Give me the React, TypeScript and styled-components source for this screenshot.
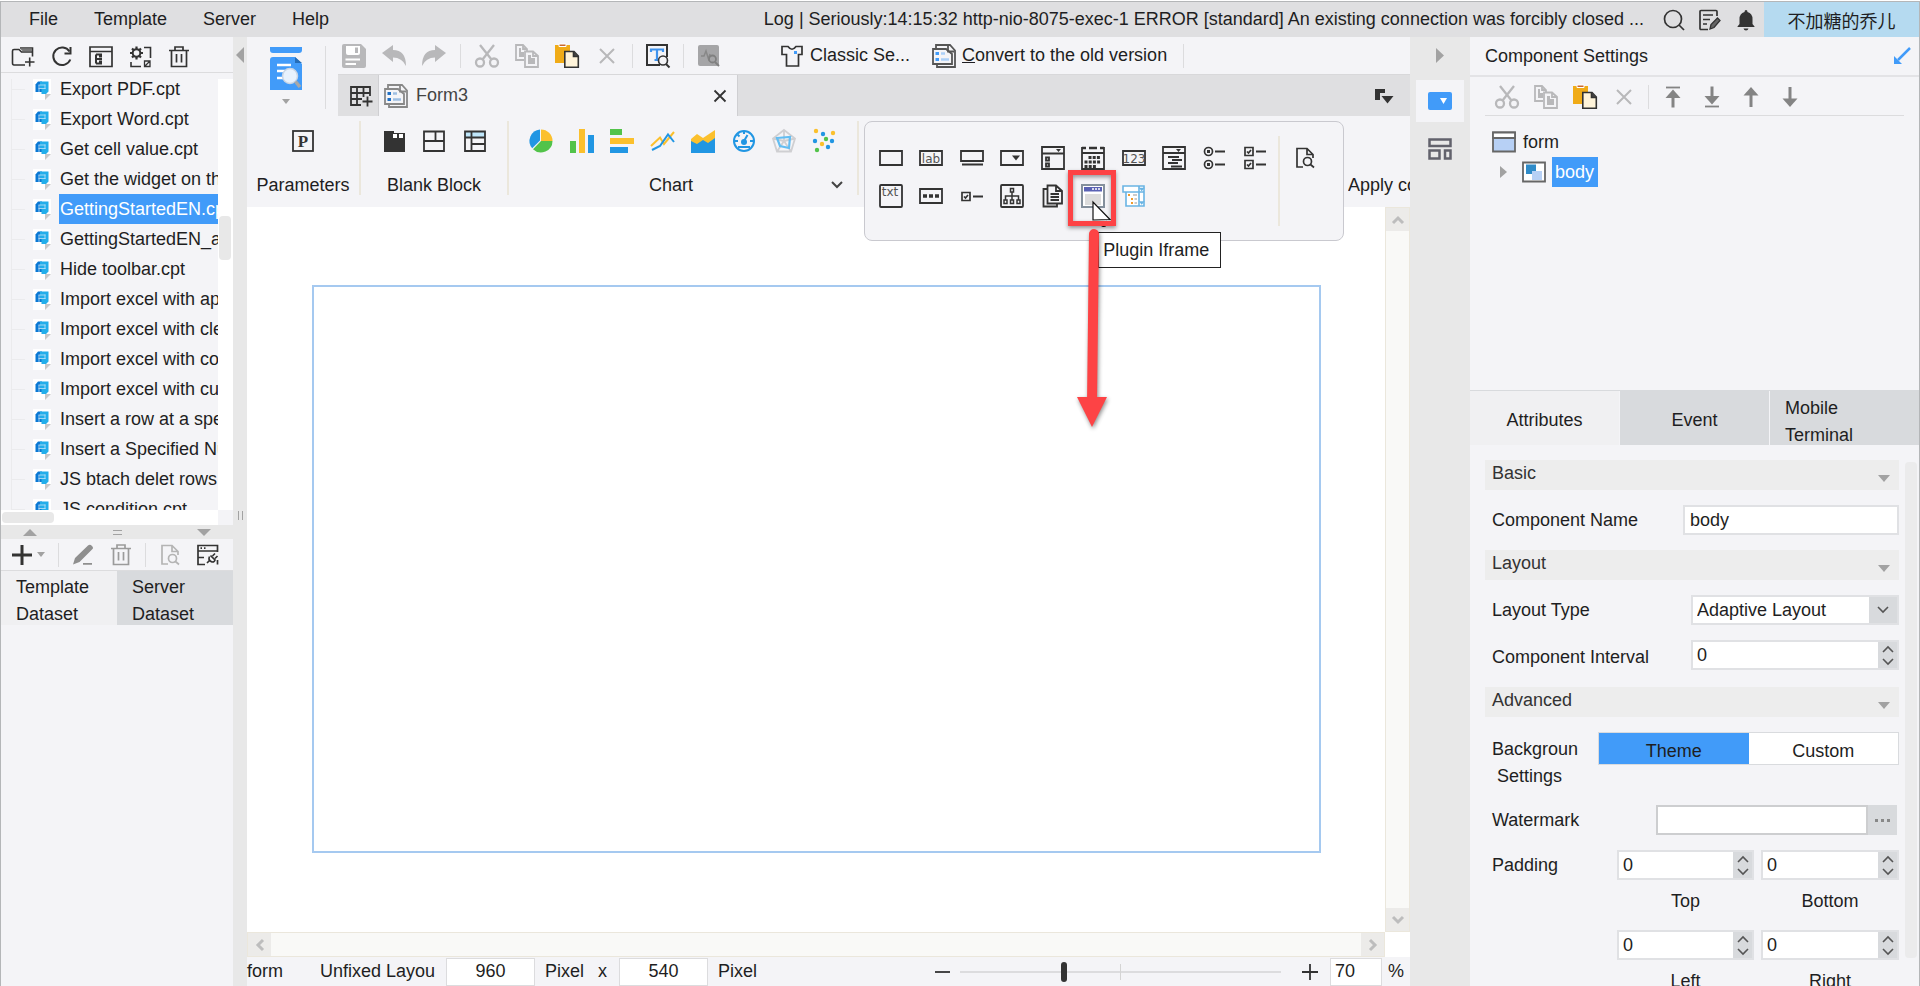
import React from "react";
import styled, { createGlobalStyle, css } from "styled-components";

const c = {
  panel: "#f4f4f7",
  bar: "#dfdfe1",
  strip: "#e8e8e8",
  tab: "#d8dadd",
  line: "#dcdcde",
  sand: "#ebe7dc",
  blue: "#419bf9",
  ink: "#1e1e22",
  icon: "#333333",
  dim: "#b8b8ba",
  red: "#fd4345",
};

const GlobalStyle = createGlobalStyle`
  * { box-sizing: border-box; }
  body { margin: 0; padding-top: 1px; overflow: hidden; }
  body, button, input, select {
    font-family: "Liberation Sans", "Noto Sans CJK SC", sans-serif;
    font-size: 18px;
    color: ${c.ink};
  }
  button { padding: 0; border: 0; background: none; cursor: default; }
  ul { list-style: none; margin: 0; padding: 0; }
`;

/* ---------- page frame ---------- */

const Page = styled.div`
  display: flex;
  flex-direction: column;
  height: calc(100vh - 1px);
  border: 1px solid #b4b6b8;
  border-bottom: 0;
  background: ${c.panel};
`;

const MenuBar = styled.header`
  display: flex;
  flex: none;
  height: 35px;
  align-items: center;
  background: ${c.bar};
`;

const Menus = styled.nav`
  display: flex;
  gap: 36px;
  padding-left: 28px;
`;

const MenuTools = styled.div`
  display: flex;
  align-items: center;
  gap: 12px;
  margin-left: auto;
`;

const LogText = styled.span`
  margin-right: 6px;
  white-space: nowrap;
`;

const UserName = styled.button`
  height: 35px;
  width: 155px;
  margin-left: -6px;
  background: #b5daf0;
`;

const Workspace = styled.div`
  display: grid;
  flex: 1;
  min-height: 0;
  grid-template-columns: 232px 14px minmax(0, 1fr) 60px 449px;
  grid-template-rows: minmax(0, 1fr);
`;

const IconButton = styled.button`
  display: flex;
  flex: none;
  align-items: center;
  justify-content: center;
  height: 24px;
  min-width: 24px;
`;

const Svg = styled.svg`
  display: block;
  flex: none;
  overflow: visible;
`;

const Separator = styled.span<{ $h: number; $m?: number }>`
  flex: none;
  width: 1px;
  height: ${(p) => p.$h}px;
  margin: 0 ${(p) => p.$m ?? 0}px;
  background: ${c.line};
`;

/* ---------- left side ---------- */

const LeftPanel = styled.aside`
  display: flex;
  flex-direction: column;
  min-height: 0;
`;

const LeftToolbar = styled.div`
  display: flex;
  flex: none;
  align-items: center;
  gap: 15px;
  height: 36px;
  padding: 4px 10px 0;
  border-bottom: 1px solid ${c.line};
`;

const TreeArea = styled.div`
  display: grid;
  flex: none;
  grid-template-columns: minmax(0, 1fr) 15px;
  grid-template-rows: 431px 15px;
  margin-top: 6px;
`;

const Files = styled.ul`
  overflow: hidden;
  margin-left: 10px;
  border-left: 1px solid #ebebed;
  & > li:first-child { margin-top: -5px; }
`;

const FileRow = styled.li`
  display: flex;
  align-items: center;
  height: 30px;
  &::before {
    content: "";
    flex: none;
    width: 13px;
    height: 1px;
    margin-right: 8px;
    background: #ebebed;
  }
`;

const FileName = styled.button<{ $on?: boolean }>`
  flex: 1;
  min-width: 0;
  height: 30px;
  margin-left: 8px;
  padding-left: 1px;
  overflow: hidden;
  text-align: left;
  white-space: nowrap;
  ${(p) => p.$on && css`background: ${c.blue}; color: #fff;`}
`;

const VTrack = styled.div`
  padding: 137px 1px 0;
  background: #fff;
`;

const HTrack = styled.div`
  padding: 2px 1px;
  background: #fff;
`;

const Thumb = styled.div<{ $w: string; $h: string }>`
  width: ${(p) => p.$w};
  height: ${(p) => p.$h};
  border-radius: 4px;
  background: ${c.strip};
`;

const SplitBar = styled.div`
  display: flex;
  flex: none;
  align-items: center;
  justify-content: space-between;
  height: 14px;
  padding: 0 22px;
  background: ${c.strip};
`;

const DataToolbar = styled.div`
  display: flex;
  flex: none;
  align-items: center;
  gap: 14px;
  height: 32px;
  padding: 0 9px;
  border-bottom: 1px solid ${c.line};
`;

const AddButton = styled(IconButton)`
  width: 36px;
  justify-content: flex-start;
  gap: 3px;
`;

const DataTabs = styled.div`
  display: grid;
  flex: none;
  grid-template-columns: 1fr 1fr;
`;

const DataTab = styled.button<{ $on?: boolean }>`
  height: 54px;
  padding: 3px 0 0 15px;
  line-height: 27px;
  text-align: left;
  background: ${(p) => (p.$on ? "#f0f0f2" : c.tab)};
`;

const LeftStrip = styled.div`
  display: flex;
  flex-direction: column;
  align-items: center;
  gap: 448px;
  padding-top: 10px;
  background: ${c.strip};
`;

/* ---------- centre ---------- */

const Center = styled.main`
  display: flex;
  flex-direction: column;
  min-width: 0;
`;

const Head = styled.div`
  display: grid;
  flex: none;
  grid-template-columns: 78px 13px minmax(0, 1fr);
  grid-template-rows: 37px 42px;
`;

const LogoButton = styled.button`
  grid-row: 1 / 3;
  display: flex;
  flex-direction: column;
  align-items: center;
  gap: 9px;
  padding-top: 10px;
`;

const HeadRule = styled.span`
  grid-row: 1 / 3;
  width: 1px;
  height: 63px;
  margin-top: 9px;
  background: ${c.line};
`;

const Toolbar = styled.div`
  display: flex;
  align-items: center;
  gap: 16px;
  padding-left: 4px;
`;

const TextButton = styled.button<{ $lead: number }>`
  display: flex;
  align-items: center;
  gap: 6px;
  margin-left: ${(p) => p.$lead}px;
  white-space: nowrap;
`;

const TabBar = styled.div`
  display: flex;
  align-items: center;
  background: ${c.bar};
  border-top: 1px solid #d8d8da;
`;

const NewTab = styled(IconButton)`
  width: 40px;
  padding-left: 6px;
`;

const DocTab = styled.div`
  display: flex;
  align-items: center;
  gap: 8px;
  width: 360px;
  height: 100%;
  padding: 0 5px;
  border: solid #cfcfd2;
  border-width: 0 1px;
  color: #444;
  background: ${c.panel};
`;

const CloseTab = styled(IconButton)`
  margin-left: auto;
`;

const TabMenu = styled(IconButton)`
  margin: 0 14px 0 auto;
`;

const Ribbon = styled.div`
  display: flex;
  flex: none;
  height: 91px;
`;

const Group = styled.section<{ $w: number }>`
  display: flex;
  flex: none;
  flex-direction: column;
  gap: 20px;
  width: ${(p) => p.$w}px;
  padding-top: 13px;
  align-items: center;
  white-space: nowrap;
`;

const GroupIcons = styled.div<{ $w: number }>`
  display: flex;
  justify-content: space-between;
  width: ${(p) => p.$w}px;
`;

const GroupLabel = styled.div`
  display: flex;
  align-items: center;
  justify-content: center;
  align-self: stretch;
  padding: 0 8px;
  line-height: 24px;
`;

const GrowLabel = styled.span`
  flex: 1;
  text-align: center;
`;

const SandRule = styled.span<{ $h: number }>`
  flex: none;
  width: 2px;
  height: ${(p) => p.$h}px;
  margin-top: 5px;
  background: ${c.sand};
`;

const WidgetPanel = styled.section`
  position: relative;
  z-index: 2;
  display: flex;
  flex: none;
  width: 480px;
  height: 120px;
  margin: 5px 0 0 5px;
  padding: 9px 14px 0;
  border: 1px solid #c9c9cf;
  border-radius: 8px;
  background: ${c.panel};
`;

const WidgetGrid = styled.div`
  display: grid;
  grid-template-columns: repeat(10, 24px);
  grid-auto-rows: 24px;
  justify-content: space-between;
  row-gap: 14px;
  width: 388px;
  margin: 15px 11px 0 0;
`;

const WidgetMore = styled(IconButton)`
  margin: 15px 0 0 13px;
`;

const Marked = styled.div`
  position: relative;
`;

const MarkBox = styled.div`
  position: absolute;
  left: -13px;
  top: -14px;
  width: 48px;
  height: 56px;
  border: 5px solid ${c.red};
  box-shadow: 0 2px 4px rgba(0, 0, 0, 0.4), inset 0 2px 4px rgba(0, 0, 0, 0.4);
`;

const Tooltip = styled.div`
  position: absolute;
  left: 17px;
  top: 48px;
  width: 123px;
  height: 36px;
  padding-left: 4px;
  border: 1px solid #222;
  line-height: 34px;
  white-space: nowrap;
  background: #fff;
`;

const MarkArrow = styled(Svg)`
  position: absolute;
  left: -4px;
  top: 40px;
  filter: drop-shadow(1px 2px 2px rgba(0, 0, 0, 0.45));
`;

const Cursor = styled(Svg)`
  position: absolute;
  left: 11px;
  top: 17px;
`;

const ClippedLabel = styled.span`
  min-width: 0;
  margin-left: 4px;
  padding-top: 57px;
  overflow: hidden;
  line-height: 24px;
  white-space: nowrap;
`;

const Stage = styled.div`
  display: grid;
  flex: 1;
  min-height: 0;
  grid-template-columns: minmax(0, 1fr) 25px;
  grid-template-rows: minmax(0, 1fr) 25px;
  background: #fff;
`;

const Canvas = styled.div`
  display: flex;
  padding: 78px 64px 79px 65px;
`;

const FormBody = styled.div`
  flex: 1;
  border: 2px solid #a5c9f0;
`;

const Scroll = styled.div<{ $vertical?: boolean }>`
  display: flex;
  flex-direction: ${(p) => (p.$vertical ? "column" : "row")};
  justify-content: space-between;
  border: 1px solid ${c.sand};
  background: #f9f9f7;
`;

const ScrollButton = styled.button`
  display: flex;
  align-items: center;
  justify-content: center;
  width: 23px;
  height: 23px;
  background: #ecebe9;
`;

const StatusBar = styled.footer`
  display: flex;
  flex: none;
  align-items: center;
  height: 29px;
  white-space: nowrap;
`;

const StatusText = styled.span<{ $w: number }>`
  flex: none;
  width: ${(p) => p.$w}px;
`;

const SizeInput = styled.input<{ $w: number; $left?: boolean }>`
  flex: none;
  width: ${(p) => p.$w}px;
  height: 28px;
  padding: 0 4px;
  border: 1px solid ${c.line};
  background: #fff;
  text-align: ${(p) => (p.$left ? "left" : "center")};
`;

const ZoomSlider = styled.input`
  flex: none;
  width: 321px;
  height: 20px;
  margin: 0 15px 0 5px;
  appearance: none;
  background:
    linear-gradient(#d4d4d4, #d4d4d4) 50% 50% / 1px 16px no-repeat,
    linear-gradient(${c.line}, ${c.line}) 0 50% / 100% 2px no-repeat;
  &::-webkit-slider-thumb {
    appearance: none;
    width: 6px;
    height: 20px;
    border-radius: 3px;
    background: #333;
  }
`;

const ZoomControls = styled.div`
  display: flex;
  align-items: center;
  margin-left: auto;
  padding-right: 6px;
`;

const ZoomValue = styled.label`
  display: flex;
  align-items: center;
  gap: 6px;
  margin-left: 10px;
`;

/* ---------- right side ---------- */

const RightStrip = styled.div`
  display: flex;
  flex-direction: column;
  align-items: center;
  padding-top: 11px;
  background: ${c.strip};
`;

const SideButton = styled.button<{ $on?: boolean }>`
  display: flex;
  align-items: center;
  justify-content: center;
  width: 48px;
  height: 42px;
  margin-top: ${(p) => (p.$on ? 17 : 6)}px;
  background: ${(p) => (p.$on ? c.panel : "transparent")};
`;

const RightPanel = styled.aside`
  display: flex;
  flex-direction: column;
  min-height: 0;
`;

const PanelTop = styled.section`
  flex: none;
  height: 353px;
`;

const PanelTitle = styled.h2`
  display: flex;
  align-items: center;
  justify-content: space-between;
  height: 40px;
  margin: 0;
  padding: 0 5px 0 15px;
  border-bottom: 2px solid #e3e3e6;
  font-size: 18px;
  font-weight: normal;
`;

const PanelToolbar = styled.div`
  display: flex;
  align-items: center;
  gap: 15px;
  height: 39px;
  margin: 0 15px;
  padding: 2px 10px 0;
  border-bottom: 1px solid ${c.line};
`;

const Tree = styled.ul`
  padding: 11px 0 0 22px;
`;

const TreeRow = styled.li<{ $in?: boolean }>`
  display: flex;
  align-items: center;
  gap: ${(p) => (p.$in ? 6 : 7)}px;
  height: 30px;
  padding-left: ${(p) => (p.$in ? 8 : 0)}px;
`;

const TreeArrow = styled.span`
  display: flex;
  align-items: center;
  width: 16px;
`;

const Selected = styled.span`
  height: 30px;
  padding: 0 4px 0 3px;
  line-height: 30px;
  color: #fff;
  background: ${c.blue};
`;

const PanelTabs = styled.div`
  display: grid;
  flex: none;
  grid-template-columns: 1fr 1fr 1fr;
  gap: 1px;
  border-top: 1px solid ${c.tab};
`;

const PanelTab = styled.button<{ $on?: boolean; $left?: boolean }>`
  height: 54px;
  padding: 4px 0 0 ${(p) => (p.$left ? 15 : 0)}px;
  line-height: 27px;
  text-align: ${(p) => (p.$left ? "left" : "center")};
  background: ${(p) => (p.$on ? "#f0f0f2" : c.tab)};
`;

const PanelBody = styled.div`
  display: flex;
  flex: 1;
  gap: 6px;
  min-height: 0;
  padding: 15px 2px 0 15px;
  overflow: hidden;
`;

const Form = styled.form`
  display: flex;
  flex: 1;
  flex-direction: column;
  gap: 15px;
`;

const SectionHead = styled.h3`
  display: flex;
  flex: none;
  justify-content: space-between;
  height: 30px;
  margin: 0;
  padding: 0 9px 0 7px;
  font-size: 18px;
  font-weight: normal;
  line-height: 27px;
  color: #333;
  background: #ededed;
  svg { margin-top: 15px; }
`;

const Field = styled.div<{ $h?: number; $line?: number }>`
  display: flex;
  flex: none;
  align-items: flex-start;
  justify-content: space-between;
  height: ${(p) => p.$h ?? 30}px;
  padding-left: 7px;
  line-height: ${(p) => p.$line ?? 30}px;
`;

const fieldBox = css`
  height: 30px;
  border: 2px solid #e0e1e4;
  background: #fff;
`;

const TextInput = styled.input`
  ${fieldBox}
  width: 216px;
  padding: 0 5px;
`;

const SelectBox = styled.div`
  ${fieldBox}
  display: flex;
  width: 208px;
  background: ${c.tab};
`;

const Select = styled.select`
  flex: 1;
  min-width: 0;
  padding: 0 4px;
  border: 0;
  appearance: none;
  background: #fff;
`;

const SelectFace = styled.span`
  display: flex;
  align-items: center;
  justify-content: center;
  width: 28px;
`;

const SpinBox = styled.div<{ $w: number }>`
  ${fieldBox}
  display: flex;
  flex: none;
  width: ${(p) => p.$w}px;
  background: ${c.tab};
`;

const SpinInput = styled.input`
  flex: 1;
  min-width: 0;
  padding: 0 4px;
  border: 0;
  background: #fff;
`;

const SpinButtons = styled.div`
  display: flex;
  flex-direction: column;
  justify-content: space-between;
  width: 19px;
`;

const SpinButton = styled.button`
  display: flex;
  align-items: center;
  justify-content: center;
  height: 13px;
`;

const Legend = styled.span`
  line-height: 27px;
  white-space: pre;
  padding-top: 4px;
`;

const Toggle = styled.div`
  display: grid;
  grid-template-columns: 1fr 1fr;
  width: 301px;
  height: 33px;
  border: 1px solid #d9dbde;
`;

const ToggleOption = styled.label<{ $on?: boolean }>`
  line-height: 36px;
  height: 31px;
  text-align: center;
  background: ${(p) => (p.$on ? c.blue : "#fff")};
`;

const ToggleInput = styled.input`
  position: absolute;
  margin: 0;
  appearance: none;
`;

const PickerBox = styled.div`
  display: flex;
  height: 30px;
  margin-right: 2px;
`;

const PickerInput = styled.input`
  width: 212px;
  border: 2px solid #cdced0;
  background: #fff;
`;

const PickerButton = styled.button`
  display: flex;
  align-items: center;
  justify-content: center;
  width: 29px;
  background: ${c.tab};
`;

const Sides = styled.div`
  display: grid;
  grid-template-columns: 137px 138px;
  column-gap: 7px;
  row-gap: 8px;
`;

const Side = styled.div`
  display: flex;
  flex-direction: column;
  label {
    line-height: 42px;
    text-align: center;
  }
`;

const PanelThumb = styled.div`
  width: 12px;
  height: 496px;
  margin-top: 2px;
  border-radius: 4px;
  background: #ebebec;
`;

/* ---------- icons ---------- */

type IconProps = { children: React.ReactNode; color?: string; w?: number };
const I = ({ children, color = c.icon, w = 2 }: IconProps) => (
  <Svg width="24" height="24" viewBox="0 0 24 24" fill="none" stroke={color} strokeWidth={w} aria-hidden="true">
    {children}
  </Svg>
);

const Triangle = ({ d, w, h, color = "#a2a2a2" }: { d: string; w: number; h: number; color?: string }) => (
  <Svg width={w} height={h} viewBox={`0 0 ${w} ${h}`} fill={color} aria-hidden="true"><path d={d} /></Svg>
);
const DownTri = ({ w = 12, h = 7 }) => <Triangle w={w} h={h} d={`M0 0H${w}L${w / 2} ${h}Z`} />;

const Chevron = ({ dir, color = "#555", size = 12, w = 2 }: { dir: "up" | "down" | "left" | "right"; color?: string; size?: number; w?: number }) => {
  const paths = { up: "M1 9L6 4L11 9", down: "M1 3L6 8L11 3", left: "M9 1L4 6L9 11", right: "M3 1L8 6L3 11" };
  return (
    <Svg width={size} height={size} viewBox="0 0 12 12" fill="none" stroke={color} strokeWidth={w} aria-hidden="true">
      <path d={paths[dir]} />
    </Svg>
  );
};

const NewFolder = () => <I w={1.6}><path d="M14 20H3Q1.500 20 1.500 18V6Q1.500 4.500 3 4.500H8L10.500 7H21.500V11.500M9 3H21.500V7M14 17H23.500M18.700 12.500V21.500" /><path d="M9 3.500H21V6H11.500Z" fill="#777" stroke="none" /></I>;
const Refresh = () => <I w={2}><path d="M19.500 6.500A8.800 8.800 0 1 0 20.300 14.500" /><path d="M20.500 2V8.500H14.500" /></I>;
const Details = () => <I w={1.700}><path d="M1 2H23V21.500H1ZM1 6.500H23" /><path d="M7 9.500V18.500M7 9.500H13M7 14H13M7 18.500H13M10 11.500H13M10 16.500H13" strokeWidth="2" /></I>;
const GearBox = () => (
  <I w={1.600}>
    <circle cx="8.500" cy="8" r="3.800" strokeWidth="2" />
    <path d="M8.500 1.500V4M8.500 12V14.500M2 8H4.500M12.500 8H15M4 3.500L5.800 5.300M11.200 10.700L13 12.500M13 3.500L11.200 5.300M4 12.500L5.800 10.700" strokeWidth="2.200" />
    <path d="M16 2.500H22.500V13M3 17V21.500H13" />
    <path d="M16.500 16H22V21.500H16.500ZM22 16L16.500 21.500" strokeWidth="1.300" />
  </I>
);
const Trash = ({ color = c.icon }) => <I color={color} w={1.700}><path d="M2 5.500H22M8 5V2H16V5M4.500 5.500V21.500H19.500V5.500M9.500 9V17.500M14.500 9V17.500" /></I>;

const FileIcon = () => (
  <Svg width="18" height="21" viewBox="0 0 18 21" aria-hidden="true">
    <path d="M0 0H18V15L12 21H0Z" fill="#fff" />
    <path d="M2.500 5.500L5 2.500H9V13H2.500Z" fill="#0a78d4" />
    <path d="M7 2.500H15.500V12.500L13 15H8.500V10H7Z" fill="#22aeea" />
    <path d="M5.500 6H12.500M5.500 9.500H12.500M12 5.500V10M6 6V13" stroke="#bfe2f7" strokeWidth="0.800" fill="none" />
    <path d="M12 15H18L12 21Z" fill="#c8c8c8" />
  </Svg>
);

const Pencil = () => <I color="none"><path d="M2 21.500L4 15L17 2.500Q19 1 21 3T21 6.500L8.500 19ZM12 20H21V21.800H12Z" fill="#8f8f8f" /></I>;
const PagePreview = ({ color = c.icon }) => <I color={color} w={1.700}><path d="M10 21H4V2.500H14L20 8.500V12M14 2.500V8.500H20" /><circle cx="14.500" cy="15.500" r="4" /><path d="M17.500 18.500L21 21.500" /></I>;
const DataSettings = () => (
  <I w={1.700}>
    <path d="M9 21.500H2V2.500H21.500V9M2 8H21.500M4.500 5.200H6M8 5.200H9.500M2 14.500H8M21.500 17V21.500" />
    <path d="M11 20L14 17M13.500 13.500Q12 17 15 18.500T19 17L14.500 12.500M16.500 13L19 10.500M19 15.500L21.500 13" />
  </I>
);

const Logo = () => (
  <Svg width="32" height="43" viewBox="0 0 32 43" aria-hidden="true">
    <path d="M0 0H32V3Q32 6 29 6H3Q0 6 0 3Z" fill={c.blue} />
    <path d="M3 10H25L32 17V43H0V13Q0 10 3 10Z" fill={c.blue} />
    <path d="M25 10V16H32Z" fill="#256db8" />
    <path d="M7 18H21M7 24H15M7 31H14" stroke="#fff" strokeWidth="2.500" />
    <circle cx="20" cy="29" r="7.500" fill="#e8f2fd" stroke="#c9d5e4" strokeWidth="1.500" />
    <path d="M25.500 34.500L30 40" stroke="#a8a8a8" strokeWidth="3.500" />
  </Svg>
);

const Save = () => (
  <I color="none">
    <path d="M2 0H19L24 5V22Q24 24 22 24H2Q0 24 0 22V2Q0 0 2 0Z" fill={c.dim} />
    <path d="M4 2H18V9Q18 11 16 11H6Q4 11 4 9Z" fill="#fff" /><path d="M13 3.500H16V9H13Z" fill={c.dim} />
    <path d="M3.500 15.500H18M3.500 20H14" stroke="#fff" strokeWidth="1.800" />
  </I>
);
const Undo = () => <I color="none"><path d="M0 9L11 1V6Q24 6 24 22Q20 13.500 11 13.500V18Z" fill={c.dim} /></I>;
const Redo = () => <I color="none"><path d="M24 9L13 1V6Q0 6 0 22Q4 13.500 13 13.500V18Z" fill={c.dim} /></I>;
const Cut = () => <I color={c.dim} w={2.300}><circle cx="5" cy="18.500" r="4" /><circle cx="19" cy="18.500" r="4" /><path d="M7.500 15.500L19 1M16.500 15.500L5 1" /></I>;
const Copy = () => (
  <I color={c.dim} w={1.800}>
    <path d="M9 16H1V1H8L12 5V7M8 1V5H12" /><path d="M4 4H6V8H9V13H4Z" fill={c.dim} stroke="none" />
    <path d="M10 7.500H18L23 12V23H10ZM18 7.500V12H23" /><path d="M13 11H16V14H20V20H13Z" fill={c.dim} stroke="none" />
  </I>
);
const Paste = () => (
  <I w={1.600}>
    <path d="M0 1H15V7H9V19H0Z" fill="#f0ab17" stroke="none" />
    <path d="M4 0H11V2.500H4Z" fill="#c8672c" stroke="#fff" strokeWidth="1" />
    <path d="M9.800 7.500H19L23.300 12V23.200H9.800Z" fill="#fff4da" /><path d="M18.500 7.500V12.500H23.500" fill="#444" />
  </I>
);
const Cross = ({ color = c.dim }) => <I color={color}><path d="M5 5L19 19M19 5L5 19" /></I>;
const FindText = () => (
  <I>
    <path d="M14 21H1V1H21V13" /><path d="M5 8V5.500H17V8M11 5.500V16M8.500 16H13.500" stroke="#3f93ee" strokeWidth="2.200" />
    <circle cx="17" cy="16.500" r="4.500" fill={c.panel} strokeWidth="1.600" /><path d="M20 20L23.500 23.500" />
  </I>
);
const Monitor = () => (
  <I color="none"><rect x="1" y="1" width="21" height="21" rx="2" fill="#a5a5a7" />
    <path d="M4 12H7L9 7L11.500 15L13 10" stroke="#888" strokeWidth="1.500" /><circle cx="15.500" cy="15" r="3.500" stroke="#808080" strokeWidth="1.800" /><path d="M18 18L22 22" stroke="#808080" strokeWidth="2" />
  </I>
);
const Shirt = () => <I w={1.700}><path d="M6.500 22V10.500H2V2.500H8Q12 8 16 2.500H22V10.500H18.500V22Z" /><path d="M14 7H17V10H14Z" fill={c.blue} stroke="none" /></I>;
const FormIcon = ({ accent = "#1f6fc4", color = "#888" }) => (
  <I color={color} w={1.800}>
    <path d="M4 5V1H18L23 6.500V23H5V20" /><path d="M1 5H14L20 10V20H1Z" fill={c.panel} />
    <path d="M16 1.500V7.500H22" /><path d="M3.500 8H7V11H3.500ZM3.500 14H7V17H3.500Z" fill={accent} stroke="none" />
    <path d="M9 9.500H13M9 15.500H17" stroke={accent} strokeOpacity="0.400" strokeWidth="2.500" />
  </I>
);
const GridPlus = () => <I w={1.800}><path d="M12 21H2V3H21V12M2 9H21M2 15H13M8 3V21M14.500 3V13M13.500 17.500H23.500M18.500 12.500V22.500" /></I>;
const TabList = () => <I color="none"><path d="M3 5H13V9H8V16H3Z" fill={c.icon} /><path d="M9.500 12H21.500L15.500 19.500Z" fill={c.icon} /></I>;
const CloseIcon = () => <I w={1.800}><path d="M6.500 6.500L17.500 17.500M17.500 6.500L6.500 17.500" /></I>;

const ParamIcon = () => (
  <I w={1.800}><rect x="2" y="2" width="20" height="20" />
    <text x="12" y="18" fontFamily="Liberation Serif, serif" fontWeight="bold" fontSize="17" textAnchor="middle" fill={c.icon} stroke="none">P</text>
  </I>
);
const TabBlock = () => <I color="none"><path d="M2 2H12V4H23V23H2Z" fill={c.icon} /><path d="M11 5H15V9H11ZM17 5H21V9H17Z" fill="#fff" /></I>;
const Block2 = () => <I w={1.800}><path d="M2 2.500H22V22H2ZM2 12H22M13.500 2.500V12" /></I>;
const Block3 = () => <I w={1.800}><path d="M2 2.500H22V8.500H2Z" fill="#bfe6fa" stroke="none" /><path d="M2 2.500H22V22H2ZM2 8.500H22M8.500 2.500V22M8.500 15H22" /></I>;

const G = "#52c34a", Y = "#fbc02d", B = "#2196e3";
const Pie = () => <I color="none"><path d="M12 12V0.500A11.500 11.500 0 0 1 23.500 12Z" fill={Y} /><path d="M12 12H23.500A11.500 11.500 0 0 1 4 20.200Z" fill={G} /><path d="M11 11.500V0.500A11.500 11.500 0 0 0 3.200 19.300Z" fill={B} /></I>;
const Column = () => <I color="none"><path d="M0 12H6V24H0Z" fill={G} /><path d="M9 0H15V24H9Z" fill={Y} /><path d="M18 6H24V24H18Z" fill={B} /></I>;
const Bar = () => <I color="none"><path d="M0 0H12V6H0Z" fill={G} /><path d="M0 9H24V15H0Z" fill={Y} /><path d="M0 18H18V24H0Z" fill={B} /></I>;
const Line = () => <I><path d="M0 17L9 8.500L13 15L23 3" stroke={Y} /><path d="M1 21L9 17L17 5.500L23 13" stroke={B} /></I>;
const Area = () => <I color="none"><path d="M0 10L6 5L12 9L24 1V24H0Z" fill={Y} /><path d="M0 12L6 15L12 11L17 14L24 9V24H0Z" fill={B} /></I>;
const Gauge = () => <I color={B}><circle cx="12" cy="12" r="10" /><circle cx="12" cy="13" r="3" fill={B} stroke="none" /><path d="M12 12L15.500 6M2.500 12H6M18 12H21.500M12 2.500V5M5.500 5.500L7.500 7.500M6 18H18" /></I>;
const Radar = () => <I color="#cfcfd2" w={1.800}><path d="M12 1L23 9.500L19 22.500H5L1 9.500ZM12 1V12L23 9.500M12 12L19 22.500M12 12L5 22.500M12 12L1 9.500" /><path d="M5 9L18 8L17 19L8 17Z" stroke="#62bdf2" strokeWidth="2.200" /></I>;
const Scatter = () => (
  <I color="none">
    {([[3, 2, Y], [20, 4, Y], [10, 5, B], [2, 12, B], [13, 10, G], [19, 12, B], [9, 15, Y], [15, 18, B], [4, 21, G]] as [number, number, string][]).map(([x, y, f]) => <circle key={`${x}-${y}`} cx={x} cy={y} r="2.200" fill={f} />)}
  </I>
);

const Mono = ({ x, y, children, size = 12 }: { x: number; y: number; children: string; size?: number }) => (
  <text x={x} y={y} fontFamily="DejaVu Sans, sans-serif" fontSize={size} textAnchor="middle" fill="#555" stroke="none">{children}</text>
);
const TextField = () => <I w={1.800}><path d="M1 5H23V19H1Z" /></I>;
const LabelIcon = () => <I w={1.800}><path d="M1 5H23V19H1Z" /><Mono x={12} y={16.5}>lab</Mono></I>;
const ButtonIcon = () => <I w={1.800}><path d="M1 5H23V15H1ZM2 18.500H23" /></I>;
const ComboIcon = () => <I w={1.800}><path d="M1 5H23V19H1Z" /><path d="M12 9.500H20L16 14.500Z" fill={c.icon} stroke="none" /></I>;
const CheckCombo = () => <I w={1.800}><path d="M1 1H23V23H1ZM1 7.500H23M5 11.500H8V14.500H5ZM5 17.500H8V20.500H5Z" /><path d="M15 3H20L17.500 6Z" fill={c.icon} stroke="none" /></I>;
const DateIcon = () => (
  <I w={1.800}>
    <path d="M1 1V23H23V1M1 7H23" /><path d="M1 2H5M8 2H16M19 2H23" strokeWidth="2.500" />
    <path d="M7.500 11.500H20M3.500 16H20M3.500 20.500H16" strokeWidth="3" strokeDasharray="3 1.200" />
  </I>
);
const NumberIcon = () => <I w={1.800}><path d="M1 5H23V19H1Z" /><Mono x={12} y={16.5}>123</Mono></I>;
const ListIcon = () => <I w={1.800}><path d="M1 1H23V23H1ZM1 7H23M6 11H17M10 14H20M6 17H16M9 20.500H20" /><path d="M14 3H19L16.500 6Z" fill={c.icon} stroke="none" /></I>;
const RadioIcon = () => <I w={1.700}><circle cx="5.500" cy="5.500" r="4" /><circle cx="5.500" cy="18.500" r="4" /><path d="M4 5.500H7M4 18.500H7" strokeWidth="3" /><path d="M12 5.500H22M12 18.500H22" strokeWidth="2" /></I>;
const ChecksIcon = () => <I w={1.700}><path d="M2 1.500H10V9.500H2ZM2 14.500H10V22.500H2ZM4 5.500L5.500 7L8 4M4 18.500L5.500 20L8 17" /><path d="M13 5.500H23M13 18.500H23" strokeWidth="2" /></I>;
const TxtIcon = () => <I w={1.800}><rect x="1" y="1" width="22" height="22" rx="1" /><Mono x={11} y={12}>txt</Mono></I>;
const PasswordIcon = () => <I w={1.800}><path d="M1 5H23V19H1Z" /><path d="M4 12H20" strokeWidth="3.500" strokeDasharray="4 2" /></I>;
const CheckIcon = () => <I w={1.700}><path d="M2 8.500H10V16.500H2ZM4 12.500L5.500 14L8 11" /><path d="M13 12.500H23" strokeWidth="2" /></I>;
const OrgIcon = () => <I w={1.800}><rect x="1" y="1" width="22" height="22" rx="1" /><path d="M10.500 4.500H13.500V8H10.500ZM12 8V16M5.500 16V12H18.500V16M4 16H7V19.500H4ZM10.500 16H13.500V19.500H10.500ZM17 16H20V19.500H17Z" strokeWidth="1.500" /></I>;
const DocsIcon = () => <I w={1.800}><path d="M6 5H2.500V22.500H16V20" /><path d="M6.500 1.500H15L21 7V19.500H6.500ZM15 1.500V7H21M9.500 10H18M9.500 13H18M9.500 16H18" /></I>;
const IframeIcon = () => <I><path d="M1 1H23V23H1Z" fill="#fff" stroke="#84909c" /><path d="M3 3H21V7.500H3Z" fill="#5a62b4" stroke="none" /><path d="M11 5H19" stroke="#fff" strokeWidth="1.500" strokeDasharray="2 1" /><path d="M4 10H20V21H4Z" fill="#dcdcdc" stroke="none" /></I>;
const TreeCombo = () => <I color="#69b4e4" w={1.600}><path d="M1 2H22V8H1ZM4 8V22H22V8M17 2V22" fill="#fff" /><path d="M18.500 4.500H21L19.700 6ZM18.500 18H21L19.700 19.500Z" fill="#69b4e4" /><path d="M6 11H8M9 15H11M9 19H11" stroke="#f09a2c" strokeWidth="2" /><path d="M11 11H15M12.500 15H15M12.500 19H15" stroke="#bbb" /></I>;

const SearchIcon = () => <I w={1.700}><circle cx="11" cy="11" r="8.500" /><path d="M17 17L22 22" /></I>;
const NoteIcon = () => <I w={1.700}><path d="M10 21.500H3Q2 21.500 2 20.500V3.500Q2 2.500 3 2.500H18Q19 2.500 19 3.500V8M5 7H15M5 11.500H12M5 16H9" /><path d="M12 21L13 16.500L19.500 10L22 12.500L16 19.500Z" fill="#666" strokeWidth="1.300" /></I>;
const BellIcon = () => <I color="none"><path d="M12 2Q13.500 2 13.500 4Q18.500 5.500 18.500 11V16L20.500 18.500V19H3.500V18.500L5.500 16V11Q5.500 5.500 10.500 4Q10.500 2 12 2ZM9.500 20.500H14.500Q14 22.500 12 22.500T9.500 20.500Z" fill={c.icon} /></I>;
const PopIn = () => <I color={c.blue}><path d="M20 4L8 16" strokeWidth="2.500" /><path d="M4 12V20H12Z" fill={c.blue} stroke="none" /></I>;
const Move = ({ up, edge }: { up?: boolean; edge?: boolean }) => (
  <I color="#848484" w={3}>
    <g transform={up ? undefined : "rotate(180 12 12)"}>
      {edge && <path d="M5 2.500H19" strokeWidth="1.800" />}
      <path d={edge ? "M12 9V22.500" : "M12 8V22"} />
      <path d={edge ? "M12 4.500L19.500 13H4.500Z" : "M12 2L19.500 10.500H4.500Z"} fill="#848484" stroke="none" />
    </g>
  </I>
);
const SideBlue = () => <Svg width="24" height="18" viewBox="0 0 24 18" aria-hidden="true"><rect width="24" height="18" rx="2" fill={c.blue} /><path d="M12 6H19L15.500 12Z" fill="#fff" /></Svg>;
const SideLayout = () => <Svg width="24" height="22" viewBox="0 0 24 22" fill="none" stroke="#62626c" strokeWidth="2.500" aria-hidden="true"><path d="M1.500 1.500H22.500V8H1.500ZM1.500 12.500H11.500V20.500H1.500ZM17 12.500H22.500V20.500H17Z" /></Svg>;
const FormNode = () => <I w={1.800} color="#666"><path d="M1 2.500H23V21.500H1Z" fill="#b7d0f5" /><path d="M1 2.500H23V8H1Z" fill="#fff" /></I>;
const BodyNode = () => <I w={1.800} color="#666"><path d="M1 2.500H23V21.500H1Z" fill="#fff" /><path d="M4 4.500H14V14H4Z" fill="#2f8bc8" stroke="none" /><path d="M10 11H20V20H10Z" fill="#b7d0f5" stroke="none" /></I>;

/* ---------- data ---------- */

const files = [
  "Export PDF.cpt", "Export Word.cpt", "Get cell value.cpt", "Get the widget on the",
  "GettingStartedEN.cpt", "GettingStartedEN_a", "Hide toolbar.cpt", "Import excel with app",
  "Import excel with clea", "Import excel with con", "Import excel with cust", "Insert a row at a spec",
  "Insert a Specified Nu", "JS btach delet rows.c", "JS condition.cpt",
];

const charts: [string, React.FC][] = [
  ["Pie", Pie], ["Column", Column], ["Bar", Bar], ["Line", Line],
  ["Area", Area], ["Gauge", Gauge], ["Radar", Radar], ["Scatter", Scatter],
];

const widgets: [string, React.FC][] = [
  ["Text", TextField], ["Label", LabelIcon], ["Button", ButtonIcon], ["Drop-down box", ComboIcon],
  ["Drop-down checkbox", CheckCombo], ["Date", DateIcon], ["Number", NumberIcon], ["List", ListIcon],
  ["Radio group", RadioIcon], ["Checkbox group", ChecksIcon], ["Text area", TxtIcon],
  ["Password", PasswordIcon], ["Checkbox", CheckIcon], ["Tree", OrgIcon], ["Multi file", DocsIcon],
  ["Plugin Iframe", IframeIcon], ["Tree drop-down", TreeCombo],
];

const Tool = ({ name, children }: { name: string; children: React.ReactNode }) => (
  <IconButton type="button" aria-label={name}>{children}</IconButton>
);

const Spin = ({ id, w }: { id: string; w: number }) => (
  <SpinBox $w={w}>
    <SpinInput id={id} defaultValue="0" inputMode="numeric" />
    <SpinButtons>
      <SpinButton type="button" aria-label="Increase"><Chevron dir="up" w={1.6} /></SpinButton>
      <SpinButton type="button" aria-label="Decrease"><Chevron dir="down" w={1.6} /></SpinButton>
    </SpinButtons>
  </SpinBox>
);

const Section = ({ children }: { children: string }) => (
  <SectionHead>{children}<DownTri /></SectionHead>
);

/* ---------- page ---------- */

const Left = () => (
  <LeftPanel>
    <LeftToolbar>
      <Tool name="New folder"><NewFolder /></Tool>
      <Tool name="Refresh"><Refresh /></Tool>
      <Tool name="Details"><Details /></Tool>
      <Tool name="Settings"><GearBox /></Tool>
      <Tool name="Delete"><Trash /></Tool>
    </LeftToolbar>
    <TreeArea>
      <Files>
        {files.map((name, i) => (
          <FileRow key={name}>
            <FileIcon />
            <FileName type="button" $on={i === 4}>{name}</FileName>
          </FileRow>
        ))}
      </Files>
      <VTrack><Thumb $w="12px" $h="44px" /></VTrack>
      <HTrack><Thumb $w="52px" $h="11px" /></HTrack>
    </TreeArea>
    <SplitBar>
      <Triangle w={14} h={7} d="M0 7L7 0L14 7Z" />
      <Triangle w={9} h={5} d="M0 0H9V1H0ZM0 4H9V5H0Z" />
      <DownTri w={14} />
    </SplitBar>
    <DataToolbar>
      <AddButton type="button" aria-label="Add dataset">
        <I w={3}><path d="M2 12H22M12 2V22" /></I><DownTri w={8} h={5} />
      </AddButton>
      <Separator $h={24} $m={-2} />
      <Tool name="Edit dataset"><Pencil /></Tool>
      <Tool name="Delete dataset"><Trash color="#9b9b9b" /></Tool>
      <Separator $h={24} $m={-2} />
      <Tool name="Preview dataset"><PagePreview color="#b4b4b4" /></Tool>
      <Tool name="Dataset settings"><DataSettings /></Tool>
    </DataToolbar>
    <DataTabs>
      <DataTab type="button" $on>Template<br />Dataset</DataTab>
      <DataTab type="button">Server<br />Dataset</DataTab>
    </DataTabs>
  </LeftPanel>
);

const WidgetsPanel = () => (
  <WidgetPanel>
    <WidgetGrid>
      {widgets.map(([name, Icon]) =>
        name === "Plugin Iframe" ? (
          <Marked key={name}>
            <Tool name={name}><Icon /></Tool>
            <Tooltip role="tooltip">{name}</Tooltip>
            <Cursor width="20" height="30" viewBox="0 0 20 30" aria-hidden="true">
              <path d="M1 1V19L18 18.500Z" fill="#fff" stroke="#111" strokeWidth="1.200" />
              <path d="M9 20Q8 26 13 25L15 20" fill="#fff" stroke="#111" strokeWidth="1.500" />
            </Cursor>
            <MarkBox />
            <MarkArrow width="32" height="206" viewBox="0 0 32 206" aria-hidden="true">
              <path d="M17 10L15 180" stroke={c.red} strokeWidth="10" strokeLinecap="round" />
              <path d="M0 173H30L15 203Z" fill={c.red} />
            </MarkArrow>
          </Marked>
        ) : (
          <Tool key={name} name={name}><Icon /></Tool>
        ),
      )}
    </WidgetGrid>
    <SandRule $h={90} />
    <WidgetMore type="button" aria-label="Preview"><PagePreview /></WidgetMore>
  </WidgetPanel>
);

const Middle = () => (
  <Center>
    <Head>
      <LogoButton type="button" aria-label="Preview form"><Logo /><DownTri w={8} h={5} /></LogoButton>
      <HeadRule />
      <Toolbar>
        <Tool name="Save"><Save /></Tool>
        <Tool name="Undo"><Undo /></Tool>
        <Tool name="Redo"><Redo /></Tool>
        <Separator $h={24} $m={-2} />
        <Tool name="Cut"><Cut /></Tool>
        <Tool name="Copy"><Copy /></Tool>
        <Tool name="Paste"><Paste /></Tool>
        <Tool name="Delete"><Cross /></Tool>
        <Separator $h={24} $m={-3} />
        <Tool name="Find"><FindText /></Tool>
        <Separator $h={24} $m={-3} />
        <Tool name="Monitor"><Monitor /></Tool>
        <TextButton type="button" $lead={43}><Shirt />Classic Se...</TextButton>
        <TextButton type="button" $lead={6}><FormIcon accent={c.blue} color="#555" /><span><u>C</u>onvert to the old version</span></TextButton>
        <Separator $h={24} />
      </Toolbar>
      <TabBar>
        <NewTab type="button" aria-label="New tab"><GridPlus /></NewTab>
        <DocTab>
          <FormIcon />Form3
          <CloseTab type="button" aria-label="Close"><CloseIcon /></CloseTab>
        </DocTab>
        <TabMenu type="button" aria-label="Open tabs"><TabList /></TabMenu>
      </TabBar>
    </Head>
    <Ribbon>
      <Group $w={112}>
        <Tool name="Parameter pane"><ParamIcon /></Tool>
        <GroupLabel>Parameters</GroupLabel>
      </Group>
      <SandRule $h={74} />
      <Group $w={146}>
        <GroupIcons $w={105}>
          <Tool name="Tab block"><TabBlock /></Tool>
          <Tool name="Report block"><Block2 /></Tool>
          <Tool name="Table block"><Block3 /></Tool>
        </GroupIcons>
        <GroupLabel>Blank Block</GroupLabel>
      </Group>
      <SandRule $h={74} />
      <Group $w={348}>
        <GroupIcons $w={308}>
          {charts.map(([name, Icon]) => <Tool key={name} name={name}><Icon /></Tool>)}
        </GroupIcons>
        <GroupLabel>
          <GrowLabel>Chart</GrowLabel>
          <Tool name="More charts"><Chevron dir="down" color="#444" /></Tool>
        </GroupLabel>
      </Group>
      <SandRule $h={74} />
      <WidgetsPanel />
      <ClippedLabel>Apply components</ClippedLabel>
    </Ribbon>
    <Stage>
      <Canvas><FormBody /></Canvas>
      <Scroll $vertical>
        <ScrollButton type="button" aria-label="Scroll up"><Chevron dir="up" color="#bdbdbd" w={3} /></ScrollButton>
        <ScrollButton type="button" aria-label="Scroll down"><Chevron dir="down" color="#bdbdbd" w={3} /></ScrollButton>
      </Scroll>
      <Scroll>
        <ScrollButton type="button" aria-label="Scroll left"><Chevron dir="left" color="#bdbdbd" w={3} /></ScrollButton>
        <ScrollButton type="button" aria-label="Scroll right"><Chevron dir="right" color="#bdbdbd" w={3} /></ScrollButton>
      </Scroll>
    </Stage>
    <StatusBar>
      <StatusText $w={73}>form</StatusText>
      <StatusText $w={126}>Unfixed Layou</StatusText>
      <SizeInput $w={89} defaultValue="960" aria-label="Width" />
      <StatusText $w={63}>&nbsp; Pixel</StatusText>
      <StatusText $w={21}>x</StatusText>
      <SizeInput $w={89} defaultValue="540" aria-label="Height" />
      <StatusText $w={60}>&nbsp; Pixel</StatusText>
      <ZoomControls>
        <Tool name="Zoom out"><I w={1.8}><path d="M4 12H19" /></I></Tool>
        <ZoomSlider type="range" min={0} max={100} defaultValue={32} aria-label="Zoom" />
        <Tool name="Zoom in"><I w={1.8}><path d="M6 12H22M14 4V20" /></I></Tool>
        <ZoomValue><SizeInput $w={52} $left defaultValue="70" />%</ZoomValue>
      </ZoomControls>
    </StatusBar>
  </Center>
);

const Right = () => (
  <RightPanel>
    <PanelTop>
      <PanelTitle>Component Settings<Tool name="Pop in"><PopIn /></Tool></PanelTitle>
      <PanelToolbar>
        <Tool name="Cut"><Cut /></Tool>
        <Tool name="Copy"><Copy /></Tool>
        <Tool name="Paste"><Paste /></Tool>
        <Tool name="Delete"><Cross /></Tool>
        <Separator $h={24} $m={-3} />
        <Tool name="Move to top"><Move up edge /></Tool>
        <Tool name="Move to bottom"><Move edge /></Tool>
        <Tool name="Move up"><Move up /></Tool>
        <Tool name="Move down"><Move /></Tool>
      </PanelToolbar>
      <Tree>
        <TreeRow><FormNode />form</TreeRow>
        <TreeRow $in>
          <TreeArrow><Triangle w={7} h={12} d="M0 0L7 6L0 12Z" /></TreeArrow>
          <BodyNode /><Selected>body</Selected>
        </TreeRow>
      </Tree>
    </PanelTop>
    <PanelTabs>
      <PanelTab type="button" $on>Attributes</PanelTab>
      <PanelTab type="button">Event</PanelTab>
      <PanelTab type="button" $left>Mobile<br />Terminal</PanelTab>
    </PanelTabs>
    <PanelBody>
      <Form>
        <Section>Basic</Section>
        <Field><label htmlFor="name">Component Name</label><TextInput id="name" defaultValue="body" /></Field>
        <Section>Layout</Section>
        <Field>
          <label htmlFor="layout">Layout Type</label>
          <SelectBox>
            <Select id="layout" defaultValue="a"><option value="a">Adaptive Layout</option></Select>
            <SelectFace><Chevron dir="down" w={1.6} /></SelectFace>
          </SelectBox>
        </Field>
        <Field $h={32} $line={34}><label htmlFor="interval">Component Interval</label><Spin id="interval" w={208} /></Field>
        <Section>Advanced</Section>
        <Field $h={58}>
          <Legend id="bg">{"Backgroun\n Settings"}</Legend>
          <Toggle role="radiogroup" aria-labelledby="bg">
            <ToggleOption $on><ToggleInput type="radio" name="bg" defaultChecked />Theme</ToggleOption>
            <ToggleOption><ToggleInput type="radio" name="bg" />Custom</ToggleOption>
          </Toggle>
        </Field>
        <Field>
          <label htmlFor="mark">Watermark</label>
          <PickerBox>
            <PickerInput id="mark" />
            <PickerButton type="button" aria-label="Edit watermark">
              <Triangle w={16} h={3} color="#888" d="M0 0H3V3H0ZM6 0H9V3H6ZM12 0H15V3H12Z" />
            </PickerButton>
          </PickerBox>
        </Field>
        <Field>
          <span>Padding</span>
          <Sides>
            {["Top", "Bottom", "Left", "Right"].map((s, i) => (
              <Side key={s}><Spin id={s} w={i % 2 ? 138 : 137} /><label htmlFor={s}>{s}</label></Side>
            ))}
          </Sides>
        </Field>
      </Form>
      <PanelThumb />
    </PanelBody>
  </RightPanel>
);

export default function App() {
  return (
    <>
      <GlobalStyle />
      <Page>
        <MenuBar>
          <Menus>
            {["File", "Template", "Server", "Help"].map((m) => <button type="button" key={m}>{m}</button>)}
          </Menus>
          <MenuTools>
            <LogText>Log | Seriously:14:15:32 http-nio-8075-exec-1 ERROR [standard] An existing connection was forcibly closed ...</LogText>
            <Tool name="Search"><SearchIcon /></Tool>
            <Tool name="Notes"><NoteIcon /></Tool>
            <Tool name="Notifications"><BellIcon /></Tool>
            <UserName type="button">不加糖的乔儿</UserName>
          </MenuTools>
        </MenuBar>
        <Workspace>
          <Left />
          <LeftStrip>
            <Triangle w={8} h={16} d="M8 0V16L0 8Z" />
            <Triangle w={5} h={9} d="M0 0H1V9H0ZM4 0H5V9H4Z" />
          </LeftStrip>
          <Middle />
          <RightStrip>
            <Triangle w={8} h={15} d="M0 0V15L8 7.500Z" />
            <SideButton type="button" $on aria-label="Component settings"><SideBlue /></SideButton>
            <SideButton type="button" aria-label="Component library"><SideLayout /></SideButton>
          </RightStrip>
          <Right />
        </Workspace>
      </Page>
    </>
  );
}
